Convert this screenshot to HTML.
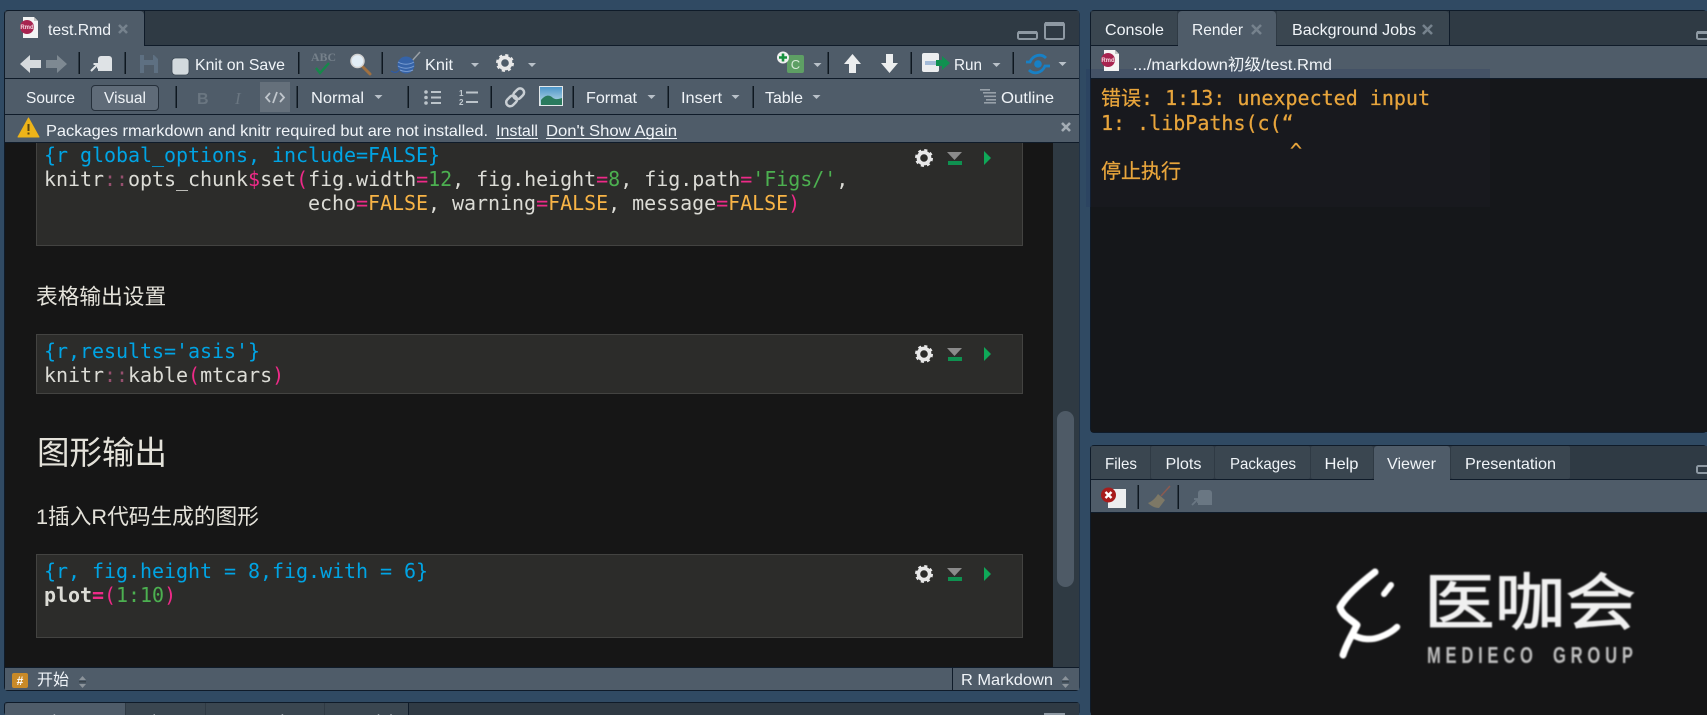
<!DOCTYPE html>
<html lang="zh">
<head>
<meta charset="utf-8">
<title>test.Rmd</title>
<style>
html,body{margin:0;padding:0;background:#304a63;width:1707px;height:715px;overflow:hidden}
svg{display:block}
text{white-space:pre}
.u{font-family:"Liberation Sans","Noto Sans CJK SC",sans-serif;font-size:16px;fill:#f0f4f8}
.c{font-family:"DejaVu Sans Mono","Liberation Mono","Noto Sans CJK SC",monospace;font-size:20px;letter-spacing:-.04px;fill:#dcdcd6}
.h{fill:#00a4e4}.p{fill:#ee2a88}.d{fill:#96506e}.o{fill:#f8b446}.g{fill:#4cb050}
.z{font-family:"Liberation Sans","Noto Sans CJK SC",sans-serif;fill:#e4e2da}
.e{font-family:"DejaVu Sans Mono","Noto Sans CJK SC",monospace;font-size:20px;fill:#e8a53c;stroke:#e8a53c;stroke-width:.25px}
</style>
</head>
<body>
<svg width="1707" height="715" viewBox="0 0 1707 715" xmlns="http://www.w3.org/2000/svg">
<defs>
<polygon id="dd" points="0,0 8,0 4,4" fill="#b9c1c9"/>
<g id="gear">
<circle r="5.6" fill="none" stroke="#e8e8e8" stroke-width="3.6"/>
<circle r="7.6" fill="none" stroke="#e8e8e8" stroke-width="2.8" stroke-dasharray="3 2.97"/>
</g>
<g id="rmd">
<path d="M3,0H14L18,4V21H3Z" fill="#f4f4f4"/>
<path d="M14,0V4H18Z" fill="#c4c4c4"/>
<circle cx="7" cy="10" r="7" fill="#a82450"/>
<text x="7" y="12" text-anchor="middle" font-family="Liberation Sans" font-size="6" font-weight="bold" fill="#f2dbe2">Rmd</text>
</g>
<g id="chunkicons">
<use href="#gear" x="924" y="0"/>
<polygon points="947,-6 962,-6 954.5,2" fill="#8b8b8b"/>
<rect x="948" y="3" width="14" height="4" fill="#0f9150"/>
<polygon points="984,-7 991,0 984,7" fill="#0fa858"/>
</g>
<g id="sort">
<polygon points="3.5,0 7,4 0,4" fill="#8b939a"/>
<rect x="0" y="5" width="7" height="1.5" fill="#39434c"/>
<polygon points="0,8 7,8 3.5,12" fill="#8b939a"/>
</g>
<filter id="blur" x="-5%" y="-5%" width="110%" height="110%"><feGaussianBlur stdDeviation=".9"/></filter>
<linearGradient id="sky" x1="0" y1="0" x2="0" y2="1"><stop offset="0" stop-color="#4a94c8"/><stop offset="1" stop-color="#c4e0ea"/></linearGradient>
</defs>

<rect width="1707" height="715" fill="#304a63"/>

<!-- LEFT PANE -->
<rect x="4" y="10" width="1075.5" height="681" rx="4" fill="#0f1b29"/>
<rect x="5" y="11" width="1074" height="34" fill="#2f3a44"/>
<rect x="5" y="46" width="1074" height="32" fill="#4f5c69"/>
<rect x="5" y="79" width="1074" height="35" fill="#4f5c69"/>
<rect x="5" y="115" width="1074" height="27" fill="#4f5c69"/>
<rect x="5" y="143" width="1074" height="524" fill="#161616"/>
<rect x="5" y="668" width="1074" height="22" fill="#4f5c69"/>
<path d="M5,46V15a4,4 0 0 1 4,-4H140a4,4 0 0 1 4,4V46Z" fill="#4f5c69"/>
<rect x="144" y="11" width="1" height="35" fill="#0f1b29"/>
<use href="#rmd" x="20" y="17"/>
<text class="u" x="48" y="35" textLength="63" lengthAdjust="spacingAndGlyphs">test.Rmd</text>
<path d="M119,25l8,8m0,-8l-8,8" stroke="#76828d" stroke-width="2.6"/>
<g fill="none" stroke="#8e99a3" stroke-width="2">
<rect x="1018" y="32" width="19" height="7" rx="1.5"/>
<rect x="1045" y="23" width="19" height="16" rx="1.5"/>
</g>
<rect x="1045" y="22" width="19" height="4" fill="#8e99a3"/>
<rect x="1018" y="31" width="19" height="3" fill="#8e99a3"/>

<!-- toolbar 1 -->
<polygon points="20,64 30,55 30,60 41,60 41,68 30,68 30,73" fill="#d6dadd"/>
<polygon points="67,64 57,55 57,60 46,60 46,68 57,68 57,73" fill="#7e8992"/>
<g fill="#0e1720">
<rect x="78.5" y="52" width="1.5" height="22"/><rect x="124.5" y="52" width="1.5" height="22"/>
<rect x="298" y="52" width="1.5" height="22"/><rect x="381.5" y="52" width="1.5" height="22"/>
<rect x="827.5" y="52" width="1.5" height="22"/><rect x="910.5" y="52" width="1.5" height="22"/>
<rect x="1012.5" y="52" width="1.5" height="22"/>
<rect x="175.5" y="86" width="1.5" height="22"/><rect x="296.5" y="86" width="1.5" height="22"/>
<rect x="407.5" y="86" width="1.5" height="22"/><rect x="490.5" y="86" width="1.5" height="22"/>
<rect x="572.5" y="86" width="1.5" height="22"/><rect x="667.5" y="86" width="1.5" height="22"/>
<rect x="752.5" y="86" width="1.5" height="22"/>
</g>
<path d="M98,59a3,3 0 0 1 3,-3h8a3,3 0 0 1 3,3v12H98Z" fill="#dfe3e6"/>
<path d="M91,71l7,-7m-4.500,0h4.500v4.500" stroke="#dfe3e6" stroke-width="2" fill="none"/>
<path d="M140,55h14l4,4v14h-18Z" fill="#5e7082"/>
<rect x="144" y="55" width="9" height="5" fill="#4f5c69"/>
<rect x="144" y="65" width="10" height="8" fill="#4f5c69"/>
<rect x="172" y="58" width="17" height="17" rx="3.500" fill="#d3dade" stroke="#3d4955" stroke-width=".8"/>
<text class="u" x="195" y="70" textLength="90" lengthAdjust="spacingAndGlyphs">Knit on Save</text>
<text x="311" y="61" font-family="Liberation Serif" font-size="11.500" font-weight="bold" fill="#76818b" textLength="25" lengthAdjust="spacingAndGlyphs">ABC</text>
<path d="M316,68l4,5l9,-10" stroke="#16884a" stroke-width="2.400" fill="none"/>
<path d="M362,66l8,8" stroke="#a07040" stroke-width="3" stroke-linecap="round"/>
<circle cx="357.500" cy="61" r="6.500" fill="#e2eef7" stroke="#d2d2d2" stroke-width="1.500"/>
<path d="M391,71c3,2 6,2 8,-1" stroke="#2d5aa6" stroke-width="1.200" fill="none"/>
<path d="M411,62l9,-10" stroke="#9aa0a6" stroke-width="1.500"/>
<circle cx="406" cy="65" r="8.500" fill="#3563a8"/>
<path d="M398,62c5,3 11,3 16,0M398,66c5,3 11,3 16,0M400,70c4,2 9,2 13,0" stroke="#7b9ed2" stroke-width="1" fill="none"/>
<text class="u" x="425" y="70" textLength="28" lengthAdjust="spacingAndGlyphs">Knit</text>
<use href="#dd" x="471" y="63"/>
<use href="#gear" x="505" y="63"/>
<use href="#dd" x="528" y="63"/>
<rect x="787" y="55" width="17" height="18" rx="2" fill="#5e9f64"/>
<text x="795.500" y="69" text-anchor="middle" font-family="Liberation Sans" font-size="13" fill="#d5e8d6">C</text>
<circle cx="783" cy="57.500" r="6" fill="#f0f0f0"/>
<path d="M783,53.500v8M779,57.500h8" stroke="#16903e" stroke-width="2.600"/>
<use href="#dd" x="813.500" y="63"/>
<polygon points="852.500,54 861,64 856,64 856,73 849,73 849,64 844,64" fill="#eceeef"/>
<polygon points="889.500,73 898,63 893,63 893,54 886,54 886,63 881,63" fill="#eceeef"/>
<rect x="922" y="53" width="17" height="19" rx="2" fill="#eceef0"/>
<rect x="925" y="61" width="11" height="4" fill="#a3bbd8"/>
<polygon points="936,60 942,60 942,56 950,63 942,70 942,66 936,66" fill="#109050"/>
<text class="u" x="954" y="70" textLength="28" lengthAdjust="spacingAndGlyphs">Run</text>
<use href="#dd" x="992.500" y="63"/>
<g fill="none" stroke="#1780c6" stroke-width="2.800">
<path d="M1026,62h4c3,-7 11,-9 16,-4"/>
<path d="M1050,66h-5c-3,7 -11,9 -16,4"/>
</g>
<circle cx="1038" cy="64" r="3.800" fill="#1780c6"/>
<use href="#dd" x="1058.500" y="62"/>

<!-- toolbar 2 -->
<text class="u" x="26" y="103" textLength="49" lengthAdjust="spacingAndGlyphs">Source</text>
<rect x="91.500" y="85.500" width="67" height="25" rx="3.500" fill="#5f6b78" stroke="#252f3a"/>
<text class="u" x="104" y="103" textLength="42" lengthAdjust="spacingAndGlyphs">Visual</text>
<text x="197" y="104" font-family="Liberation Sans" font-weight="bold" font-size="16" fill="#6a7681">B</text>
<text x="235" y="104" font-family="Liberation Serif" font-style="italic" font-size="17" fill="#6a7681">I</text>
<rect x="260" y="82" width="30" height="30" fill="#65707b"/>
<path d="M270,93l-4,4.500l4,4.500M280,93l4,4.500l-4,4.500M277,92l-4,11" stroke="#c0c6cc" stroke-width="1.800" fill="none"/>
<text class="u" x="311" y="103" textLength="53" lengthAdjust="spacingAndGlyphs">Normal</text>
<use href="#dd" x="374.500" y="95"/>
<g fill="#bcc4ca">
<circle cx="426" cy="92" r="1.800"/><circle cx="426" cy="97.500" r="1.800"/><circle cx="426" cy="103" r="1.800"/>
<rect x="431" y="91" width="10" height="2"/><rect x="431" y="96.500" width="10" height="2"/><rect x="431" y="102" width="10" height="2"/>
<rect x="466" y="91.500" width="12" height="2"/><rect x="466" y="101" width="12" height="2"/>
</g>
<text x="459" y="96" font-family="Liberation Sans" font-weight="bold" font-size="8" fill="#c4ccd2">1</text>
<text x="459" y="105" font-family="Liberation Sans" font-weight="bold" font-size="8" fill="#c4ccd2">2</text>
<g fill="none" stroke="#c9cfd4" stroke-width="2.500" transform="rotate(-45 515.500 97)">
<rect x="504" y="93" width="12" height="8" rx="4"/>
<rect x="514" y="93" width="12" height="8" rx="4"/>
</g>
<rect x="539.500" y="86.500" width="23" height="19" fill="url(#sky)" stroke="#e4e8ea"/>
<path d="M541,100c5,-6 9,-5 12,-2c3,2 6,1 9,0v7h-21Z" fill="#2a7a5e"/>
<text class="u" x="586" y="103" textLength="51" lengthAdjust="spacingAndGlyphs">Format</text>
<use href="#dd" x="647.500" y="95"/>
<text class="u" x="681" y="103" textLength="41" lengthAdjust="spacingAndGlyphs">Insert</text>
<use href="#dd" x="731.500" y="95"/>
<text class="u" x="765" y="103" textLength="38" lengthAdjust="spacingAndGlyphs">Table</text>
<use href="#dd" x="812.500" y="95"/>
<g fill="#98a1a9">
<rect x="980" y="89" width="10" height="1.600"/><rect x="983" y="92" width="13" height="1.600"/>
<rect x="984" y="95.500" width="12" height="1.600"/><rect x="986" y="99" width="10" height="1.600"/>
<rect x="984" y="102" width="12" height="1.600"/>
</g>
<text class="u" x="1001" y="103" textLength="53" lengthAdjust="spacingAndGlyphs">Outline</text>

<!-- warning bar -->
<polygon points="28.500,118 39,137 18,137" fill="#eeb419" stroke="#eeb419" stroke-linejoin="round"/>
<rect x="27.500" y="124" width="2" height="7" fill="#5a4410"/><rect x="27.500" y="132.500" width="2" height="2" fill="#5a4410"/>
<text class="u" x="46" y="136" textLength="442" lengthAdjust="spacingAndGlyphs">Packages rmarkdown and knitr required but are not installed.</text>
<text class="u" x="496" y="136" textLength="42" lengthAdjust="spacingAndGlyphs">Install</text>
<rect x="496" y="138" width="42" height="1" fill="#f0f4f8"/>
<text class="u" x="546" y="136" textLength="131" lengthAdjust="spacingAndGlyphs">Don't Show Again</text>
<rect x="546" y="138" width="131" height="1" fill="#f0f4f8"/>
<path d="M1062,123l8,8m0,-8l-8,8" stroke="#a3acb4" stroke-width="2.600"/>

<!-- editor -->
<rect x="1053" y="143" width="26" height="524" fill="#2f3a43"/>
<rect x="1057" y="411" width="17" height="176" rx="8.500" fill="#4e5a66"/>
<rect x="36.500" y="142.500" width="986" height="103" fill="#2c2c2a" stroke="#434341"/>
<rect x="36.500" y="334.500" width="986" height="59" fill="#2c2c2a" stroke="#434341"/>
<rect x="36.500" y="554.500" width="986" height="83" fill="#2c2c2a" stroke="#434341"/>
<rect x="5" y="142" width="1074" height="1" fill="#0f1b29"/>
<text class="c h" x="44" y="162">{r global_options, include=FALSE}</text>
<text class="c" x="44" y="186">knitr<tspan class="d">::</tspan>opts_chunk<tspan class="p">$</tspan>set<tspan class="p">(</tspan>fig.width<tspan class="p">=</tspan><tspan class="g">12</tspan>, fig.height<tspan class="p">=</tspan><tspan class="g">8</tspan>, fig.path<tspan class="p">=</tspan><tspan class="g">'Figs/'</tspan>,</text>
<text class="c" x="308" y="210">echo<tspan class="p">=</tspan><tspan class="o">FALSE</tspan>, warning<tspan class="p">=</tspan><tspan class="o">FALSE</tspan>, message<tspan class="p">=</tspan><tspan class="o">FALSE</tspan><tspan class="p">)</tspan></text>
<use href="#chunkicons" x="0" y="158"/>
<text class="z" x="36" y="304" font-size="21.700">表格输出设置</text>
<text class="c h" x="44" y="358">{r,results='asis'}</text>
<text class="c" x="44" y="382">knitr<tspan class="d">::</tspan>kable<tspan class="p">(</tspan>mtcars<tspan class="p">)</tspan></text>
<use href="#chunkicons" x="0" y="354"/>
<text class="z" x="37" y="464" font-size="32.500">图形输出</text>
<text class="z" x="36" y="524" font-size="21.700">1插入R代码生成的图形</text>
<text class="c h" x="44" y="578">{r, fig.height = 8,fig.with = 6}</text>
<text class="c" x="44" y="602"><tspan font-weight="bold">plot</tspan><tspan class="p" font-weight="bold">=</tspan><tspan class="p">(</tspan><tspan class="g">1:10</tspan><tspan class="p">)</tspan></text>
<use href="#chunkicons" x="0" y="574"/>

<!-- status -->
<rect x="12" y="673" width="16" height="15" rx="2" fill="#c98a28"/>
<text x="20" y="685" text-anchor="middle" font-family="Liberation Sans" font-weight="bold" font-size="12" fill="#fff">#</text>
<text class="u" x="37" y="685" font-size="16">开始</text>
<use href="#sort" x="79" y="676"/>
<rect x="952" y="668" width="1" height="22" fill="#0f1b29"/>
<text class="u" x="961" y="685" textLength="92" lengthAdjust="spacingAndGlyphs">R Markdown</text>
<use href="#sort" x="1062" y="676"/>

<!-- bottom-left pane tabs -->
<rect x="4" y="702" width="1075.500" height="13" rx="3" fill="#0f1b29"/>
<rect x="5" y="703" width="1074" height="12" fill="#2f3a44"/>
<path d="M5,715V706a3,3 0 0 1 3,-3H125V715Z" fill="#4f5c69"/>
<rect x="126" y="703" width="79" height="12" fill="#3a4650"/>
<rect x="206" y="703" width="118" height="12" fill="#3a4650"/>
<rect x="325" y="703" width="83" height="12" fill="#3a4650"/>
<rect x="408" y="703" width="1" height="12" fill="#0f1b29"/>
<text class="u" x="25" y="726">Environment</text>
<text class="u" x="141" y="726">History</text>
<text class="u" x="221" y="726">Connections</text>
<text class="u" x="340" y="726">Tutorial</text>
<g fill="none" stroke="#8e99a3" stroke-width="2"><rect x="1045" y="714" width="19" height="8"/></g>

<!-- RIGHT TOP PANE -->
<rect x="1090" y="10" width="617" height="423" rx="4" fill="#0f1b29"/>
<rect x="1091" y="11" width="616" height="34" fill="#2f3a44"/>
<rect x="1091" y="46" width="616" height="32" fill="#4f5c69"/>
<rect x="1091" y="79" width="616" height="353" fill="#15171a"/>
<rect x="1086" y="69" width="404" height="9" fill="#1e325a" fill-opacity=".22"/>
<rect x="1086" y="78" width="5" height="129" fill="#1e325a" fill-opacity=".22"/>
<rect x="1091" y="79" width="399" height="128" fill="#2a2d38" fill-opacity=".14"/>
<path d="M1091,45V15a4,4 0 0 1 4,-4H1177V45Z" fill="#3a4650"/>
<path d="M1178,46V15a4,4 0 0 1 4,-4H1272a4,4 0 0 1 4,4V46Z" fill="#4f5c69"/>
<path d="M1277,45V11H1445a4,4 0 0 1 4,4V45Z" fill="#3a4650"/>
<rect x="1449" y="11" width="1" height="34" fill="#0f1b29"/>
<text class="u" x="1105" y="35" textLength="59" lengthAdjust="spacingAndGlyphs">Console</text>
<text class="u" x="1192" y="35" textLength="51" lengthAdjust="spacingAndGlyphs">Render</text>
<path d="M1252,25l9,9m0,-9l-9,9" stroke="#76828d" stroke-width="2.600"/>
<text class="u" x="1292" y="35" textLength="124" lengthAdjust="spacingAndGlyphs">Background Jobs</text>
<path d="M1423,25l9,9m0,-9l-9,9" stroke="#76828d" stroke-width="2.600"/>
<g fill="none" stroke="#8e99a3" stroke-width="2"><rect x="1697" y="32" width="14" height="7" rx="1.500"/></g>
<rect x="1697" y="31" width="12" height="3" fill="#8e99a3"/>
<use href="#rmd" x="1101" y="50"/>
<text class="u" x="1133" y="70" textLength="199" lengthAdjust="spacingAndGlyphs">.../markdown初级/test.Rmd</text>
<text class="e" x="1101" y="105">错误: 1:13: unexpected input</text>
<text class="e" x="1101" y="130">1: .libPaths(c(“</text>
<text class="e" x="1290" y="158" font-size="23">^</text>
<text class="e" x="1101" y="178">停止执行</text>

<!-- RIGHT BOTTOM PANE -->
<rect x="1090" y="445" width="617" height="270" rx="4" fill="#0f1b29"/>
<rect x="1091" y="446" width="616" height="33" fill="#2f3a44"/>
<rect x="1091" y="480" width="616" height="32" fill="#4f5c69"/>
<rect x="1091" y="513" width="616" height="202" fill="#151516"/>
<path d="M1091,479V449a3,3 0 0 1 3,-3H1150V479Z" fill="#3a4650"/>
<rect x="1151" y="446" width="63" height="33" rx="2" fill="#3a4650"/>
<rect x="1215" y="446" width="95" height="33" rx="2" fill="#3a4650"/>
<rect x="1311" y="446" width="62" height="33" rx="2" fill="#3a4650"/>
<path d="M1374,480V449a3,3 0 0 1 3,-3H1447a3,3 0 0 1 3,3V480Z" fill="#4f5c69"/>
<rect x="1451" y="446" width="119" height="33" rx="2" fill="#3a4650"/>
<text class="u" x="1105" y="469" textLength="32" lengthAdjust="spacingAndGlyphs">Files</text>
<text class="u" x="1165.500" y="469" textLength="36" lengthAdjust="spacingAndGlyphs">Plots</text>
<text class="u" x="1230" y="469" textLength="66" lengthAdjust="spacingAndGlyphs">Packages</text>
<text class="u" x="1324.500" y="469" textLength="34" lengthAdjust="spacingAndGlyphs">Help</text>
<text class="u" x="1387" y="469" textLength="49" lengthAdjust="spacingAndGlyphs">Viewer</text>
<text class="u" x="1465" y="469" textLength="91" lengthAdjust="spacingAndGlyphs">Presentation</text>
<rect x="1697" y="466" width="14" height="7" rx="1.500" fill="none" stroke="#8e99a3" stroke-width="2"/>
<rect x="1108" y="489" width="18" height="19" fill="#eceeef"/>
<circle cx="1108.500" cy="495" r="7.500" fill="#a81c1c"/>
<path d="M1105.500,492l6,6m0,-6l-6,6" stroke="#fff" stroke-width="2.400"/>
<rect x="1137.500" y="485" width="1.500" height="24" fill="#0e1720"/>
<rect x="1177.500" y="485" width="1.500" height="24" fill="#0e1720"/>
<path d="M1170,486l-9,10" stroke="#8a5a50" stroke-width="1.600"/>
<path d="M1158,494l7,6l-6,8c-4,0 -8,-2 -11,-5c3,-1 7,-4 10,-9Z" fill="#7d7866"/>
<path d="M1198,493a3,3 0 0 1 3,-3h8a3,3 0 0 1 3,3v12h-14Z" fill="#6a7783"/>
<path d="M1192,505l6,-6m-4,0h4v4" stroke="#6a7783" stroke-width="1.800" fill="none"/>

<!-- logo -->
<g filter="url(#blur)">
<g fill="none" stroke="#ffffff" stroke-linecap="round" stroke-linejoin="round">
<path d="M1375,572C1362,582 1346,596 1340,607C1342,616 1352,620 1357,625C1352,635 1346,645 1343,655" stroke-width="7"/>
<path d="M1353,635C1362,640 1372,640 1380,637C1388,634 1393,631 1397,627" stroke-width="6.500"/>
<path d="M1391,585L1384,594" stroke-width="6"/>
</g>
<text transform="translate(1424 624) scale(1 .88)" x="0" y="0" font-family="Noto Sans CJK SC,sans-serif" font-size="70" fill="#f0f0f0" stroke="#f0f0f0" stroke-width="1.200" textLength="212" lengthAdjust="spacingAndGlyphs">医咖会</text>
<text transform="translate(1427 663) scale(.72 1)" x="0" y="0" font-family="Liberation Sans,sans-serif" font-weight="bold" font-size="23" fill="#c0c0c0" textLength="147" lengthAdjust="spacing">MEDIECO</text>
<text transform="translate(1553 663) scale(.72 1)" x="0" y="0" font-family="Liberation Sans,sans-serif" font-weight="bold" font-size="23" fill="#c0c0c0" textLength="111" lengthAdjust="spacing">GROUP</text>
</g>
</svg>
</body>
</html>
